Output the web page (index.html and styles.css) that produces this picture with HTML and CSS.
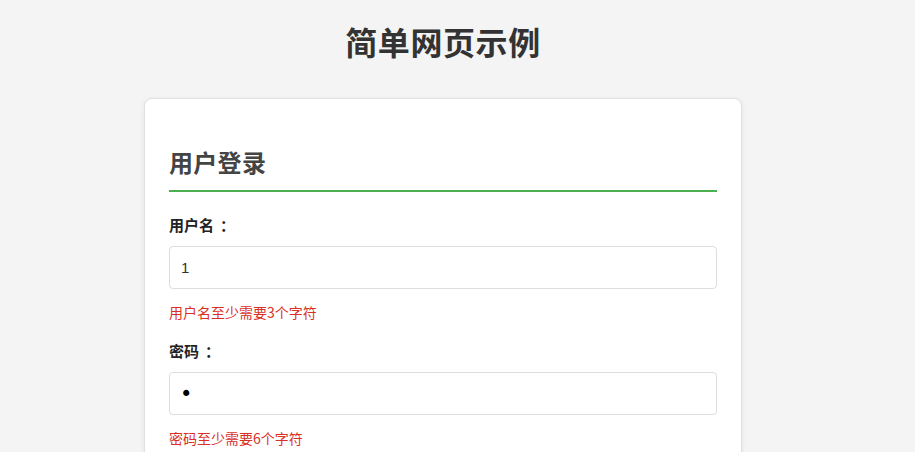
FILE: index.html
```html
<!DOCTYPE html>
<html lang="zh-CN">
<head>
<meta charset="UTF-8">
<title>简单网页示例</title>
<link rel="stylesheet" href="styles.css">
</head>
<body>
<h1 class="page-title">简单网页示例</h1>
<div class="card">
  <h2 class="card-title">用户登录</h2>
  <div class="form-group">
    <label class="form-label" for="username">用户名<span class="colon">：</span></label>
    <input class="form-input" id="username" type="text" value="1">
    <div class="form-error">用户名至少需要3个字符</div>
  </div>
  <div class="form-group">
    <label class="form-label" for="password">密码<span class="colon">：</span></label>
    <input class="form-input form-input-password" id="password" type="password" value="1">
    <div class="form-error">密码至少需要6个字符</div>
  </div>
</div>
</body>
</html>
```
FILE: styles.css
```css
* { box-sizing: border-box; }
html, body { height: 100%; }
body {
  margin: 0;
  padding: 0 29px 0 0;
  background: #f4f4f4;
  font-family: "Noto Sans CJK SC", "Noto Sans", "Liberation Sans", sans-serif;
  color: #333;
  overflow: hidden;
}
.page-title {
  margin: 21px 0 37px;
  font-size: 32px;
  line-height: 40px;
  font-weight: 700;
  text-align: center;
  color: #333;
  letter-spacing: 0.6px;
}
.card {
  width: 598px;
  margin: 0 auto;
  background: #fff;
  border: 1px solid #e0e0e0;
  border-radius: 8px;
  box-shadow: 0 1px 5px rgba(0,0,0,0.07);
  padding: 48px 24px 24px;
}
.card-title {
  margin: 0 0 23px;
  font-size: 24px;
  line-height: 30px;
  font-weight: 700;
  color: #444;
  letter-spacing: 0.3px;
  padding-bottom: 13px;
  border-bottom: 2px solid #4caf50;
}
.form-group {
  display: flex;
  flex-direction: column;
  margin-bottom: 20px;
}
.form-label {
  font-size: 15px;
  line-height: 20px;
  font-weight: 700;
  color: #222;
  margin-bottom: 11px;
}
.colon {
  margin-left: 6px;
}
.form-input {
  height: 43px;
  border: 1px solid #ddd;
  border-radius: 4px;
  padding: 0 11px;
  font-family: "Liberation Sans", "Noto Sans CJK SC", sans-serif;
  font-size: 15px;
  color: #333;
  background: #fff;
  outline: none;
}
.form-input-password {
  font-family: "DejaVu Sans", sans-serif;
  font-size: 21px;
  color: #000;
  padding-left: 10px;
}
.form-error {
  margin-top: 14px;
  font-size: 14px;
  line-height: 18px;
  color: #d93025;
}
```
